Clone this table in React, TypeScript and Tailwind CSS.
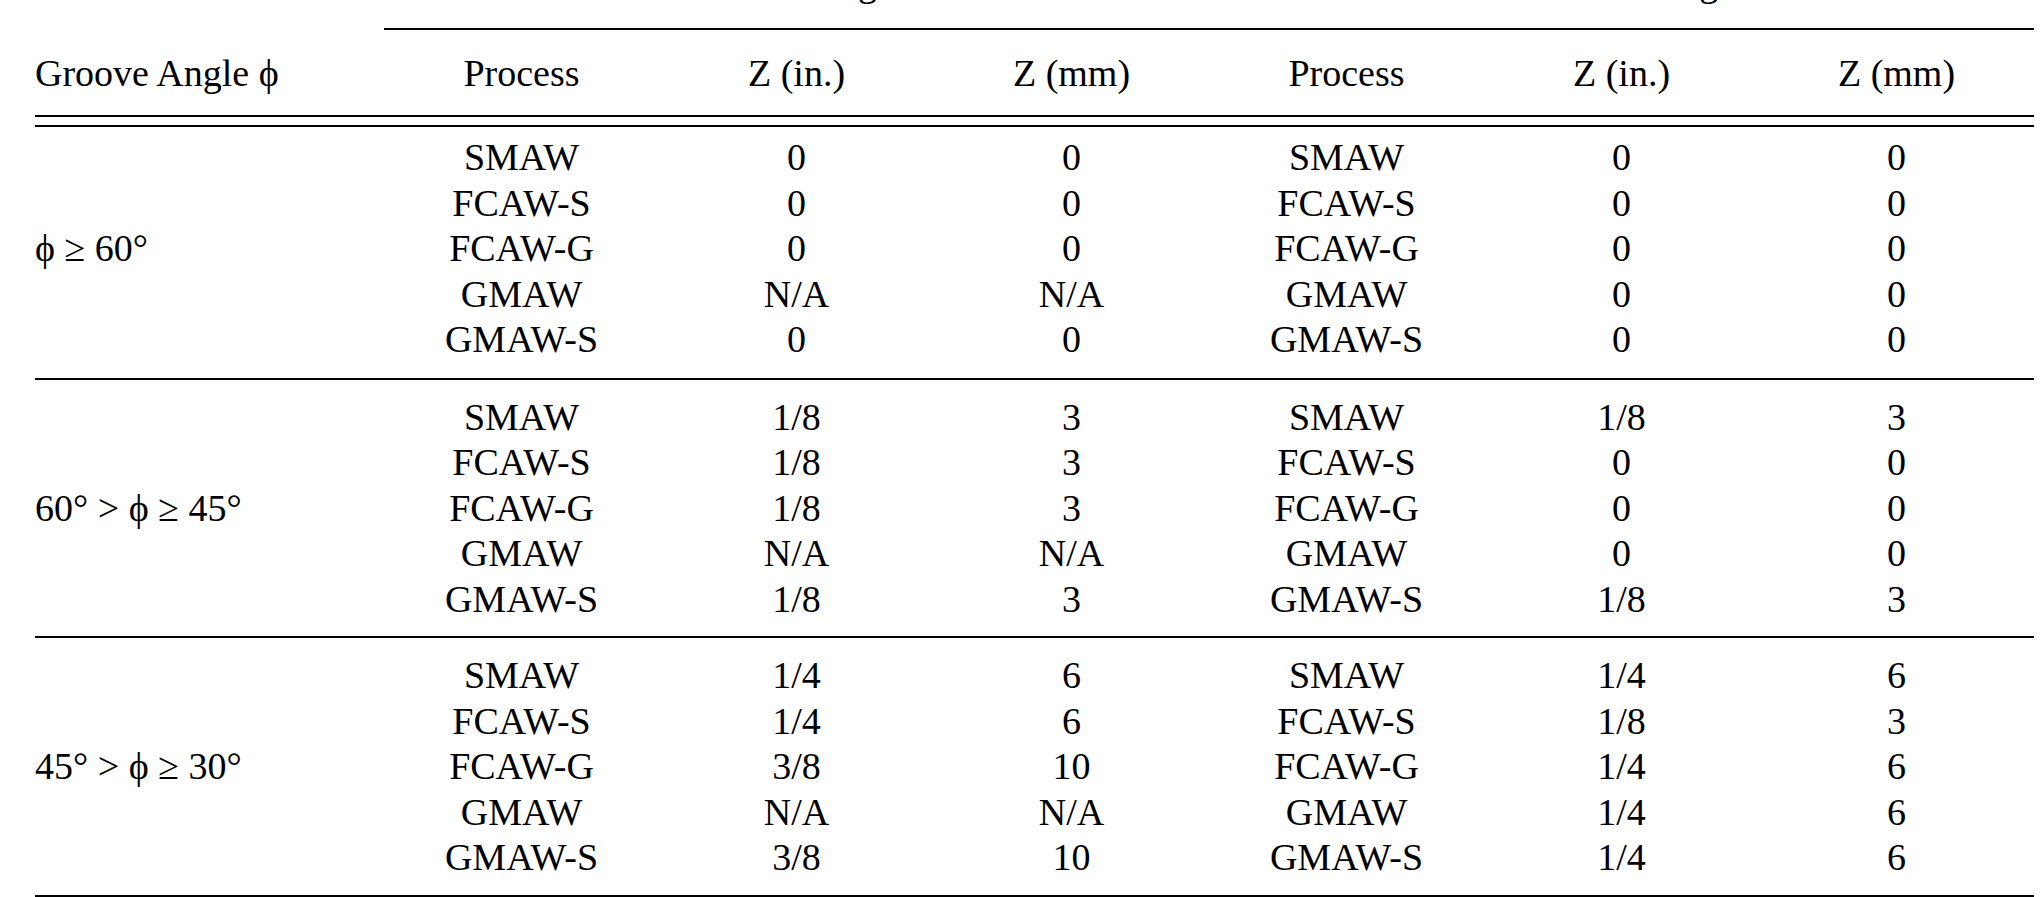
import React from 'react'

type Row = [string, string, string, string, string, string]

const groups: { label: string; first?: boolean; rows: Row[] }[] = [
  {
    label: 'ϕ ≥ 60°',
    first: true,
    rows: [
      ['SMAW', '0', '0', 'SMAW', '0', '0'],
      ['FCAW-S', '0', '0', 'FCAW-S', '0', '0'],
      ['FCAW-G', '0', '0', 'FCAW-G', '0', '0'],
      ['GMAW', 'N/A', 'N/A', 'GMAW', '0', '0'],
      ['GMAW-S', '0', '0', 'GMAW-S', '0', '0'],
    ],
  },
  {
    label: '60° > ϕ ≥ 45°',
    rows: [
      ['SMAW', '1/8', '3', 'SMAW', '1/8', '3'],
      ['FCAW-S', '1/8', '3', 'FCAW-S', '0', '0'],
      ['FCAW-G', '1/8', '3', 'FCAW-G', '0', '0'],
      ['GMAW', 'N/A', 'N/A', 'GMAW', '0', '0'],
      ['GMAW-S', '1/8', '3', 'GMAW-S', '1/8', '3'],
    ],
  },
  {
    label: '45° > ϕ ≥ 30°',
    rows: [
      ['SMAW', '1/4', '6', 'SMAW', '1/4', '6'],
      ['FCAW-S', '1/4', '6', 'FCAW-S', '1/8', '3'],
      ['FCAW-G', '3/8', '10', 'FCAW-G', '1/4', '6'],
      ['GMAW', 'N/A', 'N/A', 'GMAW', '1/4', '6'],
      ['GMAW-S', '3/8', '10', 'GMAW-S', '1/4', '6'],
    ],
  },
]

const headers = ['Process', 'Z (in.)', 'Z (mm)', 'Process', 'Z (in.)', 'Z (mm)']

export default function App() {
  return (
    <div className="h-[897px] w-full overflow-hidden bg-white text-black">
      <div className="-mt-[39px] pl-[35px] font-['Liberation_Serif','Times_New_Roman','DejaVu_Serif',serif] text-[38px] leading-[45.5px]">
        <div className="w-[1999px]">
          {/* group headings, mostly above the crop */}
          <div className="grid grid-cols-[349px_825px_825px]">
            <div />
            <div className="border-b-2 border-black pb-[21.5px] text-center">Position of Welding V or OH</div>
            <div className="border-b-2 border-black pb-[21.5px] text-center">Position of Welding H or F</div>
          </div>

          {/* column headings */}
          <div className="grid grid-cols-[349px_repeat(6,275px)] pt-[21px] pb-[18.5px]">
            <div>Groove Angle ϕ</div>
            {headers.map((h, i) => (
              <div key={i} className="text-center">
                {h}
              </div>
            ))}
          </div>
          <div className="h-[12px] border-y-2 border-black" />

          {groups.map((g) => (
            <div
              key={g.label}
              className={
                g.first
                  ? 'grid grid-cols-[349px_1650px] border-b-2 border-black pt-[8px] pb-[15px]'
                  : 'grid grid-cols-[349px_1650px] border-b-2 border-black pt-[15px] pb-[14px]'
              }
            >
              <div className="flex items-center">{g.label}</div>
              <div>
                {g.rows.map((r, i) => (
                  <div key={i} className="grid grid-cols-[repeat(6,275px)]">
                    {r.map((c, j) => (
                      <div key={j} className="text-center">
                        {c}
                      </div>
                    ))}
                  </div>
                ))}
              </div>
            </div>
          ))}
        </div>
      </div>
    </div>
  )
}
